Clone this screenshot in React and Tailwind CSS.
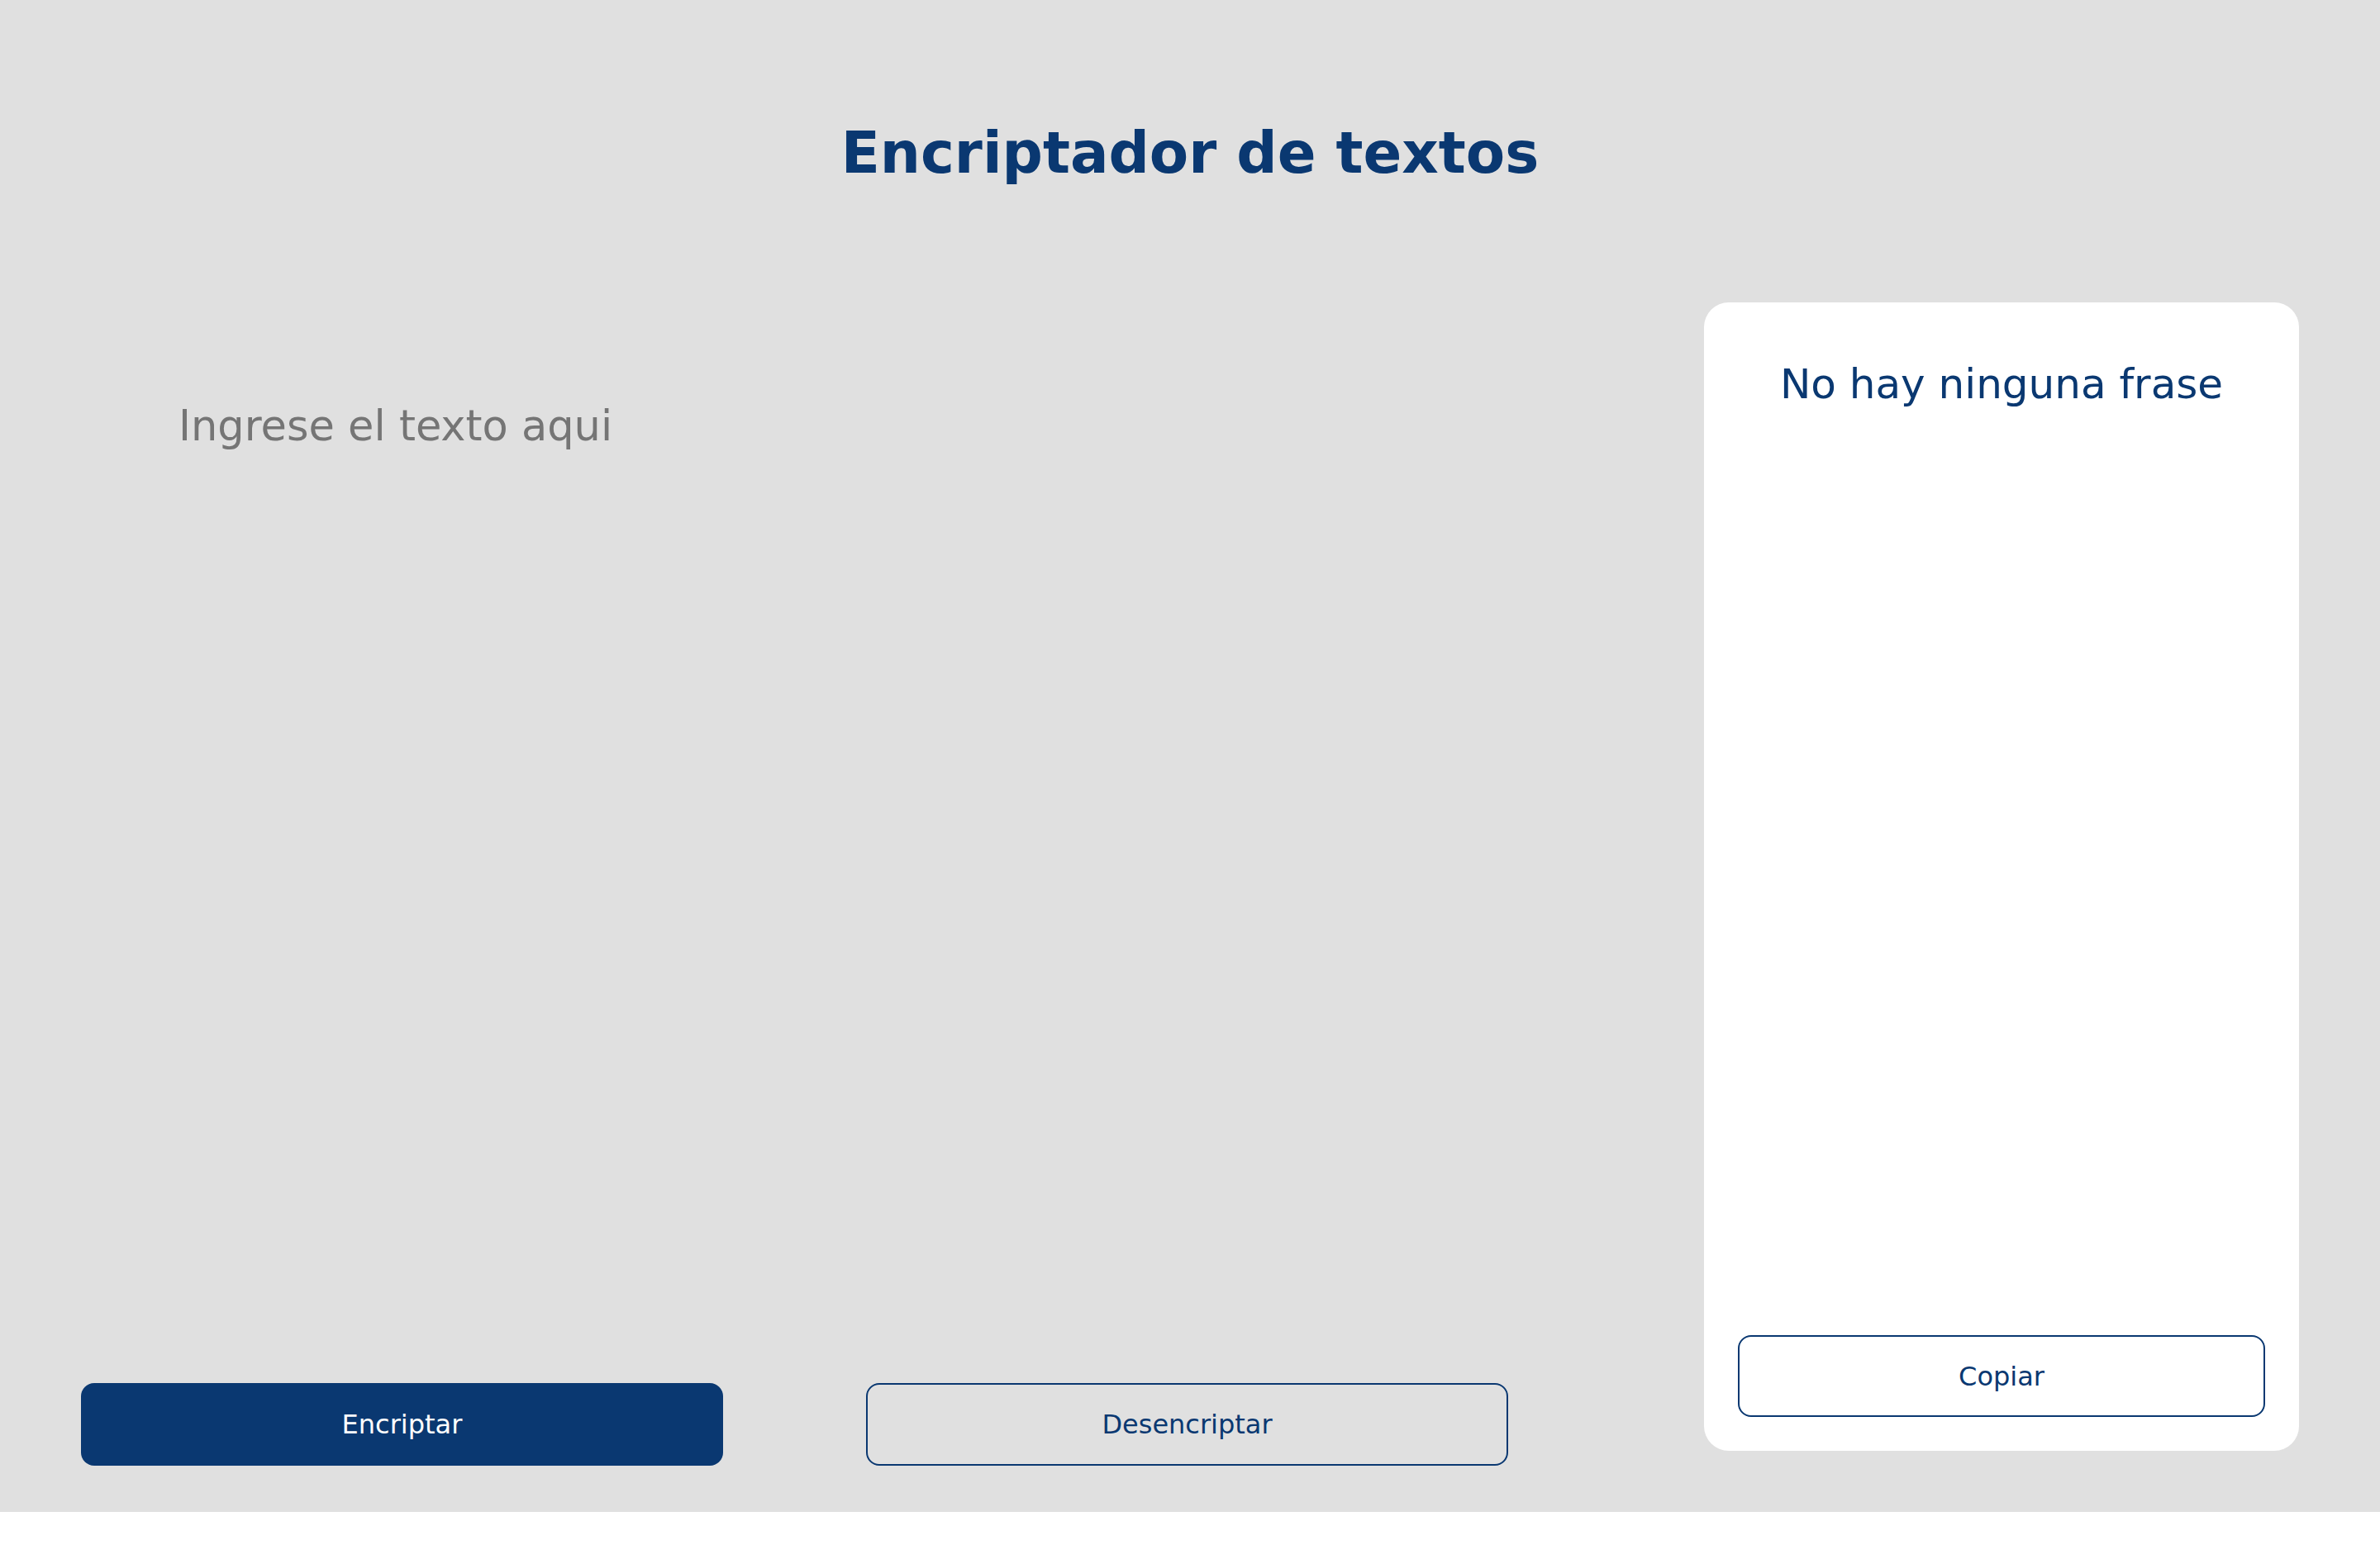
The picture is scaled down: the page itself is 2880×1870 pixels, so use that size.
import React, { useState } from 'react';

export default function App() {
    const [text, setText] = useState('');
    const [result, setResult] = useState('');

    return (
        <div className="min-h-screen bg-white" style={{ fontFamily: '"DejaVu Sans", Verdana, sans-serif' }}>
            <div className="h-[1830px] bg-[#e0e0e0] flex flex-col">
                <h1 className="pt-[151px] text-center text-[69px] leading-none font-bold text-[#0a3871]">
                    Encriptador de textos
                </h1>
                <main className="mt-[146px] flex items-start gap-[237px] px-[98px]">
                    <section className="flex-1 h-[1408px] flex flex-col">
                        <textarea
                            value={text}
                            onChange={(e) => setText(e.target.value)}
                            placeholder="Ingrese el texto aqui"
                            className="flex-1 resize-none bg-transparent pl-[118px] pt-[119px] text-[51px] leading-[1.2] text-[#0a3871] placeholder:text-[#757575] outline-none border-none"
                        />
                        <div className="grid grid-cols-2 gap-[173px]">
                            <button className="h-[100px] rounded-[16px] bg-[#0a3871] text-white text-[32px]">
                                Encriptar
                            </button>
                            <button className="h-[100px] rounded-[16px] border-2 border-[#0a3871] text-[#0a3871] text-[32px]">
                                Desencriptar
                            </button>
                        </div>
                    </section>
                    <aside className="w-[720px] h-[1390px] bg-white rounded-[30px] flex flex-col justify-between px-[41px] pt-[69px] pb-[41px]">
                        <p className="text-center text-[50px] leading-[1.2] text-[#0a3871]">
                            {result || 'No hay ninguna frase'}
                        </p>
                        <button className="h-[99px] rounded-[16px] border-2 border-[#0a3871] bg-white text-[#0a3871] text-[32px]">
                            Copiar
                        </button>
                    </aside>
                </main>
            </div>
        </div>
    );
}
